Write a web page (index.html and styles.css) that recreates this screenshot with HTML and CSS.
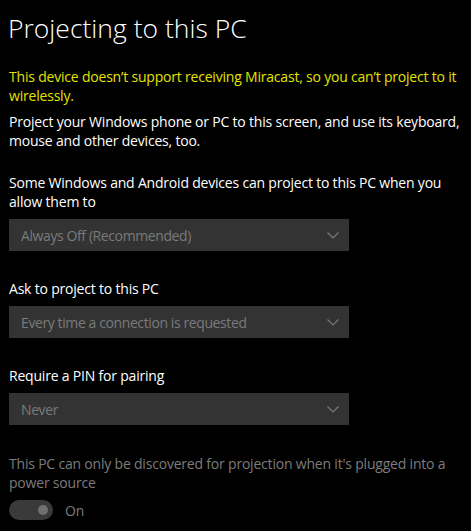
FILE: index.html
```html
<!DOCTYPE html>
<html lang="en">
<head>
<meta charset="utf-8">
<title>Projecting to this PC</title>
<link rel="stylesheet" href="styles.css">
</head>
<body>
<main class="page">
  <h1 class="title">Projecting to this PC</h1>
  <p class="warning">This device doesn’t support receiving Miracast, so you can’t project to it wirelessly.</p>
  <p class="intro">Project your Windows phone or PC to this screen, and use its keyboard, mouse and other devices, too.</p>

  <section class="setting first">
    <p class="label">Some Windows and Android devices can project to this PC when you allow them to</p>
    <div class="select">
      <span class="select-text">Always Off (Recommended)</span>
      <svg class="chevron" width="12" height="7" viewBox="0 0 12 7"><path d="M0.5 0.5 L6 6 L11.5 0.5" fill="none" stroke="currentColor" stroke-width="1.2"/></svg>
    </div>
  </section>

  <section class="setting">
    <p class="label">Ask to project to this PC</p>
    <div class="select">
      <span class="select-text">Every time a connection is requested</span>
      <svg class="chevron" width="12" height="7" viewBox="0 0 12 7"><path d="M0.5 0.5 L6 6 L11.5 0.5" fill="none" stroke="currentColor" stroke-width="1.2"/></svg>
    </div>
  </section>

  <section class="setting">
    <p class="label">Require a PIN for pairing</p>
    <div class="select">
      <span class="select-text">Never</span>
      <svg class="chevron" width="12" height="7" viewBox="0 0 12 7"><path d="M0.5 0.5 L6 6 L11.5 0.5" fill="none" stroke="currentColor" stroke-width="1.2"/></svg>
    </div>
  </section>

  <section class="setting power">
    <p class="label disabled">This PC can only be discovered for projection when it's plugged into a power source</p>
    <div class="toggle-row">
      <span class="toggle"><span class="knob"></span></span>
      <span class="toggle-text">On</span>
    </div>
  </section>
</main>
</body>
</html>
```

FILE: styles.css
```css
html, body {
  margin: 0;
  padding: 0;
  background: #000;
}

body {
  font-family: "Open Sans", "Noto Sans", sans-serif;
  font-size: 14px;
  letter-spacing: -0.2px;
  line-height: 19px;
  color: #fff;
  overflow: hidden;
}

.page {
  padding: 8px 6px 0 9px;
}

.title {
  margin: 0 0 0 -1px;
  font-size: 26.5px;
  line-height: 40px;
  font-weight: 300;
  letter-spacing: 0;
  color: #fff;
}

p {
  margin: 0;
}

.warning {
  margin-top: 19px;
  color: #e3e300;
}

.intro {
  margin-top: 7px;
}

.setting {
  margin-top: 28px;
}

.setting.first {
  margin-top: 23px;
}

.setting.power {
  margin-top: 29px;
}

.label {
  margin-bottom: 8px;
}

.disabled {
  color: #7c7c7c;
}

.select {
  width: 340px;
  height: 32px;
  box-sizing: border-box;
  background: #333333;
  display: flex;
  align-items: center;
  justify-content: space-between;
  padding: 0 10px 0 12px;
  color: #7a7a7a;
}

.select-text {
  letter-spacing: -0.4px;
}

.chevron {
  color: #7a7a7a;
  margin-top: 1px;
}

.toggle-row {
  display: flex;
  align-items: center;
  gap: 12px;
}

.toggle {
  width: 44px;
  height: 20px;
  border-radius: 10px;
  background: #3a3a3a;
  display: flex;
  align-items: center;
  justify-content: flex-end;
  padding-right: 5px;
  box-sizing: border-box;
}

.knob {
  width: 10px;
  height: 10px;
  border-radius: 50%;
  background: #707070;
}

.toggle-text {
  color: #7c7c7c;
}
```
